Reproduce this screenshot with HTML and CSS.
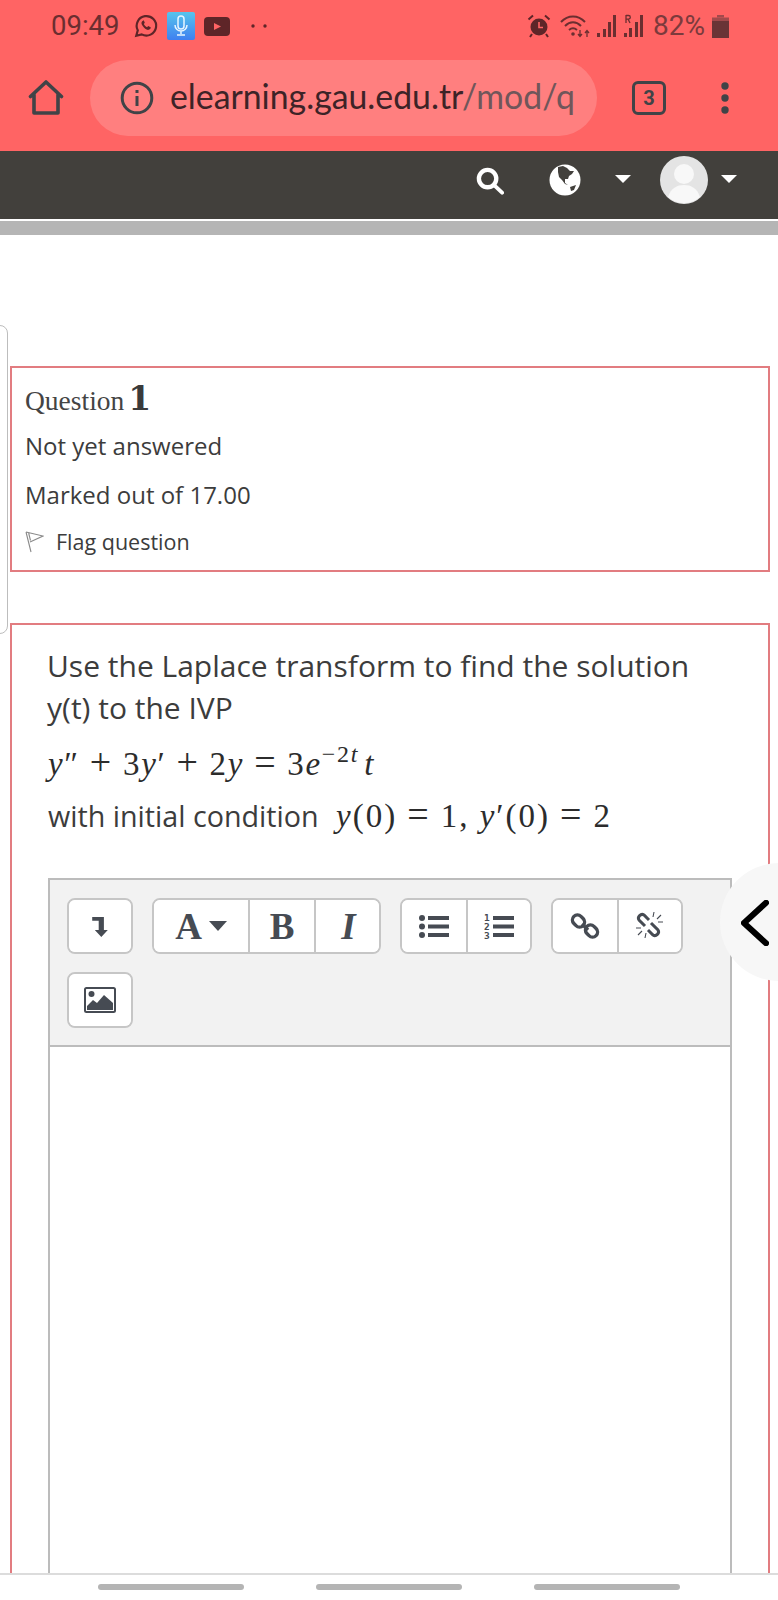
FILE: index.html
```html
<!DOCTYPE html>
<html lang="en">
<head>
<meta charset="utf-8">
<title>Question 1</title>
<link rel="stylesheet" href="styles.css">
</head>
<body>
<div class="page">
  <div class="main">
    <header class="chrome">
      <div class="status">
        <div class="status-left">
          <span class="time">09:49</span>
          <svg class="i-wa" viewBox="0 0 24 24"><path d="M3 21l1.400-5A9 9 0 1 1 8 19.700z" fill="none" stroke="#5e2528" stroke-width="2"/><path d="M8.500 7.500c-1 1-1 2.500.5 4.500s3.500 4 5.500 3.500c1.500-.3 2-1.500 1.800-2.300l-2.300-1.200-1 1.100c-1-.4-2.500-1.900-3-3l.9-1-1-2.500z" fill="#5e2528"/></svg>
          <svg class="i-app" viewBox="0 0 28 28"><defs><linearGradient id="appg" x1="0" y1="0" x2="0" y2="1"><stop offset="0" stop-color="#57c4ec"/><stop offset="1" stop-color="#3f80f0"/></linearGradient></defs><rect width="28" height="28" rx="2" fill="url(#appg)"/><rect x="11" y="4" width="6" height="13" rx="3" fill="none" stroke="#e8f6ff" stroke-width="1.500"/><path d="M8 13a6 6 0 0 0 12 0M14 19v3M10 23h8" fill="none" stroke="#e8f6ff" stroke-width="1.500"/></svg>
          <svg class="i-yt" viewBox="0 0 26 19"><rect width="26" height="19" rx="4" fill="#5e2528"/><path d="M10 6l7 3.500-7 3.500z" fill="#ff6464"/></svg>
          <svg class="i-dots" viewBox="0 0 16 4"><circle cx="2" cy="2" r="1.700" fill="#5e2528"/><circle cx="14" cy="2" r="1.700" fill="#5e2528"/></svg>
        </div>
        <div class="status-right">
          <svg class="i-alarm" viewBox="0 0 24 24"><circle cx="12" cy="13" r="8.500" fill="#5e2528"/><path d="M12 8v5.500h4" fill="none" stroke="#ff6464" stroke-width="1.600"/><path d="M1.500 5.500L6 1.500M22.500 5.500L18 1.500M5 20l-2 3M19 20l2 3" stroke="#5e2528" stroke-width="2"/></svg>
          <svg class="i-wifi" viewBox="0 0 30 24"><path d="M1 8c7-7.500 17-7.500 24 0M5 12c5-5 11-5 16 0M9 16c3-2.500 5-2.500 8 0" fill="none" stroke="#6b2e30" stroke-width="2"/><circle cx="13" cy="20" r="1.800" fill="#6b2e30"/><path d="M20 16v6M18 20l2 2.500 2-2.500M27 23v-6M25 19l2-2.500 2 2.500" fill="none" stroke="#6b2e30" stroke-width="1.300"/></svg>
          <svg class="i-sig" viewBox="0 0 21 24"><path d="M1 19h3v4H1zM7 15h3v8H7zM12 8h3v15h-3zM17 1h3v22h-3z" fill="#6b2e30"/></svg>
          <svg class="i-sig" viewBox="0 0 21 24"><path d="M1 19h3v4H1zM6 14h3v9H6zM12 8h3v15h-3zM17 1h3v22h-3z" fill="#6b2e30"/><path d="M3 1v8M3 1.500h2.500a1.800 1.800 0 0 1 0 3.600H3M5 5l2 4" fill="none" stroke="#6b2e30" stroke-width="1.300"/></svg>
          <span class="batt-text">82%</span>
          <svg class="i-batt" viewBox="0 0 17 23"><path d="M5 0h7v2.500H5z" fill="#a24a4c"/><path d="M0 2.500h17V23H0z" fill="#a24a4c"/><path d="M0 6h17v17H0z" fill="#6a3436"/></svg>
        </div>
      </div>
      <div class="addr-row">
        <svg class="i-home" viewBox="0 0 36 36"><path d="M2.500 16.500L18 2l15.500 14.500M6 14.500V33h24V14.500" fill="none" stroke="#404347" stroke-width="3.600" stroke-linejoin="round" stroke-linecap="round"/></svg>
        <div class="addr">
          <svg class="i-info" viewBox="0 0 34 34"><circle cx="17" cy="17" r="14.800" fill="none" stroke="#404347" stroke-width="3"/><path d="M15.500 15h3v10h-3zM15.500 9h3v3h-3z" fill="#404347"/></svg>
          <span class="url"><span class="host">elearning.gau.edu.tr</span><span class="path">/mod/q</span></span>
        </div>
        <span class="tabs">3</span>
        <svg class="i-menu" viewBox="0 0 8 32"><circle cx="4" cy="4" r="3.700" fill="#404347"/><circle cx="4" cy="16" r="3.700" fill="#404347"/><circle cx="4" cy="28" r="3.700" fill="#404347"/></svg>
      </div>
    </header>

    <nav class="topbar">
      <svg class="i-search" viewBox="0 0 29 29"><circle cx="12" cy="12" r="9" fill="none" stroke="#fff" stroke-width="4.500"/><path d="M19 19l8 7.500" stroke="#fff" stroke-width="4" stroke-linecap="round"/></svg>
      <svg class="i-globe" viewBox="0 0 32 32"><circle cx="16" cy="16" r="15.500" fill="#fff"/><path d="M9 3l5-1 4 2 3 3 4 0-2 3-3 2-1 3-3 0 0 4 3 2-3-1-3-4-3-3-1-5z" fill="#42403c"/><path d="M21 23l6-2-2 5-3 1z" fill="#42403c"/></svg>
      <span class="caret caret-lang"></span>
      <svg class="i-avatar" viewBox="0 0 48 48"><circle cx="24" cy="24" r="24" fill="#e4e4e4"/><circle cx="24" cy="18" r="10" fill="#f8f8f8"/><path d="M8 41c3-9 9-12 16-12s13 3 16 12a24 24 0 0 1-32 0z" fill="#f8f8f8"/></svg>
      <span class="caret caret-user"></span>
    </nav>
    <div class="rule"></div>

    <section class="card card-info">
      <h3 class="qno">Question <span class="qnum">1</span></h3>
      <p class="state">Not yet answered</p>
      <p class="grade">Marked out of 17.00</p>
      <p class="flag">
        <svg class="i-flag" viewBox="0 0 19 22"><path d="M1 1l5 20M1 1l17 4-13 6M3.500 1.500l2 8" fill="none" stroke="#8a8a8a" stroke-width="1.100"/></svg>
        <span>Flag question</span>
      </p>
    </section>

    <section class="card card-question">
      <p class="qtext">Use the Laplace transform to find the solution<br>y(t) to the IVP</p>
      <p class="math"><i>y</i>″<span class="op">+</span>3<i>y</i>′<span class="op">+</span>2<i>y</i><span class="op">=</span>3<i>e</i><sup>−2<i>t</i></sup><i>t</i></p>
      <p class="cond">with initial condition <span class="imath"><i>y</i>(0)<span class="op">=</span>1, <i>y</i>′(0)<span class="op">=</span>2</span></p>

      <div class="editor">
        <div class="toolbar">
          <div class="tb-row">
            <div class="group g1"><button class="btn">
              <svg class="i-tool" viewBox="0 0 20 20"><path d="M4 3h9v10h3l-5 5.500-5-5.500h3V6H4z" fill="#464b53"/></svg>
            </button></div>
            <div class="group g2">
              <button class="btn b-a"><span class="t-a">A</span><span class="caret-s"></span></button>
              <button class="btn b-b"><span class="t-b">B</span></button>
              <button class="btn b-i"><span class="t-i">I</span></button>
            </div>
            <div class="group g3">
              <button class="btn b-half"><svg class="i-list" viewBox="0 0 30 27"><circle cx="3" cy="5" r="3" fill="#464b53"/><circle cx="3" cy="13.500" r="3" fill="#464b53"/><circle cx="3" cy="22" r="3" fill="#464b53"/><path d="M9 3h21v4H9zM9 11.500h21v4H9zM9 20h21v4H9z" fill="#464b53"/></svg></button>
              <button class="btn b-half"><svg class="i-list" viewBox="0 0 30 27"><path d="M9 3h21v4H9zM9 11.500h21v4H9zM9 20h21v4H9z" fill="#464b53"/><text class="listnum" x="0" y="8">1</text><text class="listnum" x="0" y="17">2</text><text class="listnum" x="0" y="26">3</text></svg></button>
            </div>
            <div class="group g4">
              <button class="btn b-half"><svg class="i-link" viewBox="0 0 30 30"><g fill="none" stroke="#464b53" stroke-width="3.400"><rect x="2" y="5" width="13" height="10" rx="5" transform="rotate(45 8.500 10)"/><rect x="15" y="15" width="13" height="10" rx="5" transform="rotate(45 21.500 20)"/><path d="M12 13l6 6"/></g></svg></button>
              <button class="btn b-half"><svg class="i-link" viewBox="0 0 30 30"><g fill="none" stroke="#464b53" stroke-width="3"><path d="M10 15L4 9c-2-3 2-7 5-5l5 5"/><path d="M16 12l7 7c2 3-2 7-5 5l-5-5"/></g><path d="M18 6l1-5M22 8l4-4M23 11h5M11 22l-1 5M7 20l-4 4M6 17H1" stroke="#464b53" stroke-width="1.100"/></svg></button>
            </div>
          </div>
          <div class="tb-row">
            <div class="group g1"><button class="btn">
              <svg class="i-img" viewBox="0 0 32 26"><rect x="1" y="1" width="30" height="24" rx="1.500" fill="#fff" stroke="#464b53" stroke-width="2"/><circle cx="7.500" cy="7" r="3" fill="#464b53"/><path d="M3 23v-4l6-6 4 3 7-8 9 8v7z" fill="#464b53"/></svg>
            </button></div>
          </div>
        </div>
        <div class="editarea"></div>
      </div>
    </section>

    <div class="side-panel"></div>
    <div class="drawer-tab">
      <svg class="i-chev" viewBox="0 0 30 50"><path d="M27 3L3 25l24 22" fill="none" stroke="#000" stroke-width="6.500" stroke-linecap="round" stroke-linejoin="round"/></svg>
    </div>
  </div>
  <footer class="softnav">
    <span class="pill"></span>
    <span class="pill"></span>
    <span class="pill"></span>
  </footer>
</div>
</body>
</html>
```
FILE: styles.css
```css
* { box-sizing: border-box; }
html, body { margin: 0; padding: 0; background: #fff; }
.page { width: 778px; height: 1600px; display: flex; flex-direction: column; overflow: hidden; }
.main { position: relative; height: 1573px; overflow: hidden; }

.chrome { height: 151px; background: #ff6464; }
.status { height: 60px; display: flex; justify-content: space-between; align-items: center; padding: 0 49px 8px 51px; }
.status-left, .status-right { display: flex; align-items: center; }
.time { font: 27.500px/1 Roboto, sans-serif; color: #6b2e30; width: 68px; }
.i-wa { width: 26px; height: 26px; margin-left: 14px; }
.i-app { width: 28px; height: 28px; margin-left: 8px; }
.i-yt { width: 26px; height: 19px; margin-left: 9px; }
.i-dots { width: 16px; height: 4px; margin-left: 21px; }
.i-alarm { width: 24px; height: 24px; }
.i-wifi { width: 30px; height: 24px; margin-left: 9px; }
.i-sig { width: 21px; height: 24px; margin-left: 6px; display: block; }
.batt-text { font: 28px/1 Roboto, sans-serif; color: #7c3a3c; margin-left: 9px; }
.i-batt { width: 17px; height: 23px; margin-left: 7px; }

.addr-row { height: 91px; display: flex; align-items: center; padding: 0 0 15px 28px; }
.i-home { width: 36px; height: 36px; }
.addr { width: 507px; height: 76px; margin-left: 26px; background: #ff7f7f; border-radius: 38px; display: flex; align-items: center; padding-left: 30px; overflow: hidden; }
.i-info { width: 34px; height: 34px; flex: none; }
.url { font: 33.800px/1 Lato, sans-serif; margin-left: 16px; white-space: nowrap; padding-bottom: 2px; }
.host { color: #3d2327; }
.path { color: #70565a; }
.tabs { width: 34px; height: 34px; margin-left: 35px; border: 3px solid #404347; border-radius: 6px; font: bold 20px/28px Roboto, sans-serif; color: #404347; text-align: center; }
.i-menu { width: 8px; height: 32px; margin-left: 55px; }

.topbar { height: 68px; background: #42403c; display: flex; align-items: center; padding: 0 0 8px 476px; }
.i-search { width: 28px; height: 28px; margin-top: 0; }
.i-globe { width: 32px; height: 32px; margin-left: 45px; margin-top: -2px; }
.caret { width: 0; height: 0; border-left: 8px solid transparent; border-right: 8px solid transparent; border-top: 8px solid #fff; }
.caret-lang { margin-left: 34px; margin-top: -4px; }
.i-avatar { width: 48px; height: 48px; margin-left: 29px; margin-top: -2px; }
.caret-user { margin-left: 13px; margin-top: -4px; }

.rule { height: 16px; margin-top: 0; border-top: 2px solid #fff; background: #b5b5b5; }

.card { margin: 0 8px 0 10px; border: 2px solid #e27c80; background: #fff; }
.card-info { margin-top: 131px; height: 206px; padding: 10px 13px 0; color: #3c3c3c; }
.qno { margin: 0; font: 400 27.500px/46px "Liberation Serif", serif; color: #444; height: 44px; }
.qnum { font: bold 33px/1 "DejaVu Serif", serif; color: #3a3a3a; margin-left: -3px; }
.state, .grade, .flag { margin: 0; font-family: "Open Sans", sans-serif; }
.state { font-size: 24px; line-height: 34px; margin-top: 7px; }
.grade { font-size: 24px; line-height: 34px; margin-top: 15px; }
.flag { font-size: 21.500px; line-height: 32px; margin-top: 14px; display: flex; align-items: center; }
.i-flag { width: 19px; height: 22px; margin-right: 12px; }

.card-question { margin-top: 51px; height: 1000px; padding: 20px 35px 0; color: #3c3c3c; }
.qtext { margin: 0; font: 30px/42px "Open Sans", sans-serif; }
.math { margin: 14px 0 0 1px; font: 33px/42px "Liberation Serif", serif; letter-spacing: 1.700px; color: #2c2c2c; white-space: nowrap; }
.math sup { font-size: 24px; line-height: 0; vertical-align: 13px; margin-right: 5px; }
.op { margin: 0 10px; font-size: 38px; line-height: 0; }
.cond { margin: 10px 0 0 1px; font: 28.700px/42px "Open Sans", sans-serif; white-space: nowrap; }
.imath { font: 33px/42px "Liberation Serif", serif; letter-spacing: 2px; color: #2c2c2c; margin-left: 10px; }

.editor { margin: 41px 0 0 1px; width: 684px; border: 2px solid #bcbcbc; border-bottom: 0; height: 800px; display: flex; flex-direction: column; }
.toolbar { height: 167px; background: #f2f2f2; border-bottom: 2px solid #bcbcbc; padding: 18px 17px 0; display: flex; flex-direction: column; gap: 18px; flex: none; }
.tb-row { display: flex; }
.group { height: 56px; display: flex; background: #fff; border: 2px solid #c6c6c6; border-radius: 8px; overflow: hidden; }
.g1 { width: 66px; }
.g2 { width: 229px; margin-left: 19px; }
.g3 { width: 132px; margin-left: 19px; }
.g4 { width: 132px; margin-left: 19px; }
.btn { margin: 0; padding: 0; border: 0; background: #fff; display: flex; align-items: center; justify-content: center; width: 100%; height: 100%; }
.group .btn + .btn { border-left: 2px solid #c6c6c6; }
.b-half { width: 50%; }
.b-a { width: 94px; flex: none; }
.b-b { width: 66px; flex: none; }
.b-i { width: 67px; flex: none; }
.t-a, .t-b, .t-i { font-family: "Liberation Serif", serif; color: #464b53; font-size: 37px; line-height: 1; }
.t-a, .t-b { font-weight: bold; }
.t-i { font-style: italic; font-weight: bold; }
.caret-s { width: 0; height: 0; margin-left: 7px; border-left: 9px solid transparent; border-right: 9px solid transparent; border-top: 10px solid #464b53; }
.i-tool { width: 26px; height: 26px; }
.i-list { width: 30px; height: 27px; }
.listnum { font: bold 9.500px "DejaVu Sans Mono", monospace; fill: #464b53; }
.i-link { width: 30px; height: 30px; }
.i-img { width: 32px; height: 26px; }
.editarea { flex: 1; background: #fff; }

.side-panel { position: absolute; left: -20px; top: 325px; width: 28px; height: 309px; background: #fff; border: 1px solid #bdbdbd; border-radius: 8px; }
.drawer-tab { position: absolute; left: 720px; top: 863px; width: 118px; height: 118px; border-radius: 50%; background: #f7f7f7; padding: 37px 0 0 21px; }
.i-chev { width: 28px; height: 46px; display: block; }

.softnav { height: 27px; flex: none; border-top: 2px solid #dcdcdc; background: #fff; display: flex; justify-content: center; gap: 72px; padding-top: 9px; padding-right: 1px; }
.pill { width: 146px; height: 6px; background: #b4b4b4; border-radius: 3px; }
```
